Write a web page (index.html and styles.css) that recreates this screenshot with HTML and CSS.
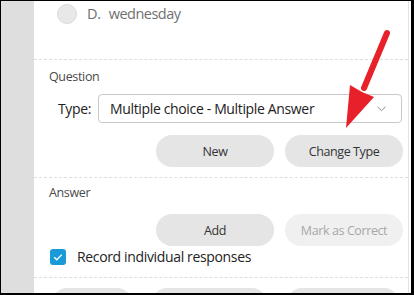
FILE: index.html
```html
<!DOCTYPE html>
<html>
<head>
<meta charset="utf-8">
<link rel="stylesheet" href="styles.css">
</head>
<body>
<div class="frame">
  <div class="side"></div>
  <div class="panel">
    <div class="option">
      <span class="radio"></span>
      <span class="letter">D.</span>
      <span class="opt-text">wednesday</span>
    </div>
    <section class="sec sec-question">
      <div class="label">Question</div>
      <div class="type-row">
        <span class="type-label">Type:</span>
        <div class="select">
          <span>Multiple choice - Multiple Answer</span>
          <svg class="chev" width="9" height="6" viewBox="0 0 9 6"><path d="M0.5 0.8 L4.5 4.6 L8.5 0.8" fill="none" stroke="#8a8a8a" stroke-width="1"/></svg>
        </div>
      </div>
      <div class="btn-row">
        <button class="btn">New</button>
        <button class="btn">Change Type</button>
      </div>
    </section>
    <section class="sec sec-answer">
      <div class="label">Answer</div>
      <div class="btn-row">
        <button class="btn">Add</button>
        <button class="btn btn-disabled">Mark as Correct</button>
      </div>
      <div class="check-row">
        <span class="checkbox"><svg width="16" height="16" viewBox="0 0 16 16"><path d="M4.2 8.2 L6.8 10.8 L11.8 5.6" fill="none" stroke="#fff" stroke-width="1.3"/></svg></span>
        <span class="check-text">Record individual responses</span>
      </div>
    </section>
    <section class="sec sec-bottom">
      <span class="pill p1"></span>
      <span class="pill p2"></span>
      <span class="pill p3"></span>
    </section>
  </div>
  <div class="scroll"></div>
  <svg class="arrow" width="414" height="295" viewBox="0 0 414 295">
    <line x1="387" y1="33" x2="364" y2="88" stroke="#e8202a" stroke-width="6" stroke-linecap="round"/>
    <polygon points="346,128 350,85 362,92 374,97" fill="#e8202a"/>
  </svg>
</div>
</body>
</html>
```
FILE: styles.css
```css
* { box-sizing: border-box; }
html, body { margin: 0; padding: 0; }
body {
  width: 414px;
  height: 295px;
  overflow: hidden;
  font-family: "Open Sans", "Noto Sans", sans-serif;
  letter-spacing: -0.35px;
}
.frame {
  position: relative;
  width: 414px;
  height: 295px;
  border-top: 1px solid #000;
  border-left: 1px solid #000;
  border-right: 3px solid #000;
  border-bottom: 2px solid #000;
  display: flex;
  background: #fff;
  overflow: hidden;
}
.side {
  width: 33px;
  flex: none;
  background: #dedede;
}
.panel {
  flex: 1;
  display: flex;
  flex-direction: column;
  background: #fff;
  overflow: hidden;
}
.panel > * { flex: none; }
.scroll {
  width: 3px;
  flex: none;
  border-left: 1px solid #e2e2e2;
  background: #fff;
}
.option {
  height: 58px;
  display: flex;
  align-items: flex-start;
  padding: 3px 0 0 23px;
  font-size: 14.5px;
  color: #707070;
}
.radio {
  width: 20px;
  height: 20px;
  border-radius: 50%;
  background: #e8e8e8;
  border: 1px solid #dadada;
  flex: none;
}
.letter { margin-left: 10px; line-height: 19px; }
.opt-text { margin-left: 8px; line-height: 19px; letter-spacing: -0.5px; }
.sec {
  border-top: 1px dashed #dedede;
}
.label {
  font-size: 12.5px;
  color: #4a4a4a;
  line-height: 18px;
  padding-left: 15px;
}
.sec-question { padding: 8px 5px 10px 0; }
.type-row {
  display: flex;
  align-items: center;
  margin-top: 8px;
  padding-left: 24px;
  font-size: 14px;
  color: #222;
}
.type-label { width: 40px; flex: none; }
.select {
  flex: 1;
  height: 29px;
  border: 1px solid #c9c9c9;
  border-radius: 4px;
  display: flex;
  align-items: center;
  justify-content: space-between;
  padding: 0 15px 0 11px;
  margin-right: 1px;
}
.chev { display: block; }
.btn-row {
  display: flex;
  justify-content: flex-end;
  gap: 11px;
  margin-top: 12px;
}
.btn {
  width: 118px;
  height: 32px;
  border: none;
  border-radius: 16px;
  background: #e5e5e5;
  color: #333;
  font-family: inherit;
  font-size: 12.5px;
  letter-spacing: -0.4px;
  padding: 0;
}
.btn-disabled {
  background: #f0f0f0;
  color: #a8a8a8;
}
.sec-answer { padding: 6px 5px 0 0; height: 100px; }
.check-row {
  display: flex;
  align-items: center;
  margin-top: 3px;
  padding-left: 16px;
  font-size: 14px;
  color: #222;
}
.checkbox {
  width: 16px;
  height: 16px;
  border-radius: 3px;
  background: #1a9ad6;
  flex: none;
  display: block;
}
.checkbox svg { display: block; }
.check-text { margin-left: 11px; line-height: 16px; }
.sec-bottom {
  padding: 10px 5px 0 18px;
  display: flex;
  gap: 20px;
}
.pill {
  height: 30px;
  border-radius: 15px;
  background: #e5e5e5;
  display: block;
}
.p1 { width: 80px; }
.p2 { width: 115px; }
.p3 { width: 112px; }
.arrow {
  position: absolute;
  left: -1px;
  top: -1px;
  pointer-events: none;
}
```
